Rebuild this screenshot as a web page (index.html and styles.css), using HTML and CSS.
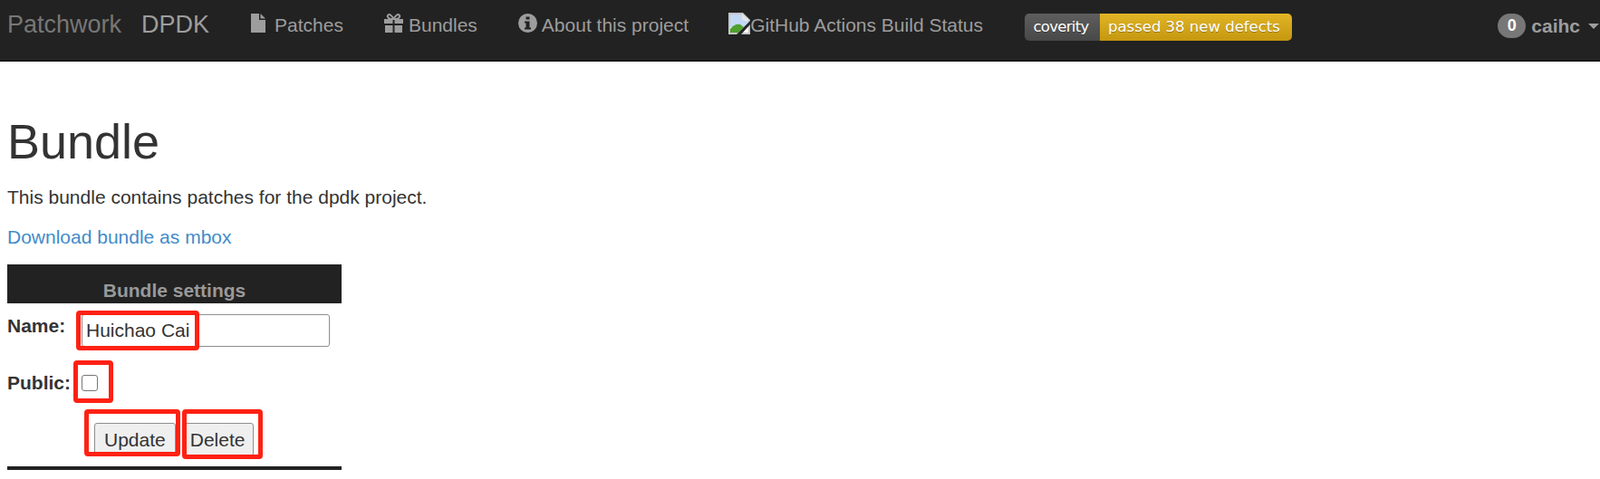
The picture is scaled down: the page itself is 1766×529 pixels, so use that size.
FILE: index.html
```html
<!DOCTYPE html>
<html lang="en">
<head>
<meta charset="utf-8">
<title>Bundle</title>
<link rel="stylesheet" href="styles.css">
</head>
<body>
<nav class="navbar">
  <a class="brand" href="#">Patchwork</a>
  <a class="project" href="#">DPDK</a>
  <a class="link link-patches" href="#">
    <svg class="glyph" viewBox="0 0 16 21" width="16" height="21"><path d="M0 0h9v7h7v14H0z" fill="#9d9d9d"/><path d="M10.500 0L16 5.500H10.500z" fill="#9d9d9d"/></svg>
    Patches</a>
  <a class="link link-bundles" href="#">
    <svg class="glyph" viewBox="0 0 21 21" width="21" height="21"><path fill="#9d9d9d" d="M0 6h9.500v5H0zM11.500 6H21v5h-9.500zM1 13h8.500v8H1zM11.500 13H20v8h-8.500z"/><path fill="none" stroke="#9d9d9d" stroke-width="2" d="M10.500 6C9 2.500 6 .2 4.500 1.500 3 2.800 4 5.500 7.500 6zM10.500 6C12 2.500 15 .2 16.500 1.500 18 2.800 17 5.500 13.500 6z"/></svg>
    Bundles</a>
  <a class="link link-about" href="#">
    <svg class="glyph" viewBox="0 0 21 21" width="21" height="21"><path fill-rule="evenodd" fill="#9d9d9d" d="M10.500 0a10.500 10.500 0 1 0 0 21 10.500 10.500 0 0 0 0-21zM8.500 3.500h4v3h-4zM7 8.500h5.500v7H14v2H7v-2h1.500v-5H7z"/></svg>
    About this project</a>
  <a class="link link-github" href="#">
    <svg class="broken" viewBox="0 0 24 24" width="24" height="24"><path fill="#c6c6c6" d="M0 0h16l8 8v16H0z"/><path fill="#fff" d="M2 2h13l7 7v13H2z"/><path fill="#c3d8f5" d="M2 2h13l1 6 6 1v7H2z"/><path fill="#4fa02e" d="M2 22v-4c3-4 7-6 11-5l4 3-6 6z"/><path fill="#262626" d="M9 24l15-15v4L14 24z"/><path fill="#e4e4e4" d="M15 1l8 7h-8z"/></svg><span>GitHub Actions Build Status</span></a>
  <span class="shield"><span class="shield-label">coverity</span><span class="shield-value">passed 38 new defects</span></span>
  <a class="user" href="#"><span class="count">0</span><b>caihc</b><i class="caret"></i></a>
</nav>
<main class="content">
  <h1>Bundle</h1>
  <p class="intro">This bundle contains patches for the dpdk project.</p>
  <p class="download"><a href="#">Download bundle as mbox</a></p>
  <table class="settings">
    <tr><th colspan="2" class="settings-head">Bundle settings</th></tr>
    <tr class="row-name">
      <td class="label">Name:</td>
      <td><input class="name-input" type="text" value="Huichao Cai"></td>
    </tr>
    <tr class="row-public">
      <td class="label">Public:</td>
      <td><input class="public-check" type="checkbox"></td>
    </tr>
    <tr class="row-actions">
      <td></td>
      <td class="actions"><button class="btn-update" type="button">Update</button><button class="btn-delete" type="button">Delete</button></td>
    </tr>
    <tr><td colspan="2" class="settings-foot"></td></tr>
  </table>
</main>
<div class="mark mark-name"></div>
<div class="mark mark-public"></div>
<div class="mark mark-update"></div>
<div class="mark mark-delete"></div>
</body>
</html>
```
FILE: styles.css
```css
* { box-sizing: border-box; }
html, body { margin: 0; padding: 0; }
body {
  position: relative;
  background: #fff;
  color: #333;
  font-family: "Liberation Sans", Arial, sans-serif;
  font-size: 21px;
  line-height: 30px;
}
a { text-decoration: none; }
.navbar {
  display: flex;
  align-items: flex-start;
  height: 68px;
  padding: 0 1px 0 8px;
  background: #222;
  border-bottom: 1px solid #080808;
  color: #9d9d9d;
}
.navbar a { color: #9d9d9d; }
.brand, .project { font-size: 27px; line-height: 30px; padding-top: 12px; }
.navbar .brand { color: #777; }
.project { margin-left: 22px; }
.link { display: flex; align-items: flex-start; padding-top: 13px; white-space: nowrap; }
.glyph { flex: none; margin-top: 2px; }
.link-patches { margin-left: 46px; gap: 10px; }
.link-bundles { margin-left: 45px; gap: 6px; }
.link-about { margin-left: 45px; gap: 5px; }
.link-github { margin-left: 44px; gap: 0; }
.broken { flex: none; margin-top: 1px; }
.shield {
  display: flex;
  height: 30px;
  margin: 15px 0 0 46px;
  border-radius: 5px;
  overflow: hidden;
  font-family: "DejaVu Sans", Verdana, sans-serif;
  font-size: 16.5px;
  line-height: 29px;
  color: #fff;
  text-align: center;
  text-shadow: 0 1px 0 rgba(1, 1, 1, .3);
}
.shield-label { width: 83px; padding-right: 3px; background: linear-gradient(#5e5e5e, #484848); letter-spacing: -.7px; }
.shield-value { width: 212px; padding-right: 4px; background: linear-gradient(#e2b526, #c4970f); }
.user { display: flex; align-items: center; margin-left: auto; padding-top: 15px; line-height: 27px; white-space: nowrap; }
.count {
  width: 31px;
  height: 27px;
  border-radius: 14px;
  background: #777;
  color: #fff;
  font-size: 18px;
  font-weight: 700;
  line-height: 27px;
  text-align: center;
}
.user b { margin-left: 6px; }
.caret {
  width: 0; height: 0;
  margin-left: 9px;
  border-top: 6px solid #9d9d9d;
  border-left: 6px solid transparent;
  border-right: 6px solid transparent;
}
.content { padding: 0 8px; }
h1 { margin: 58px 0 0; font-size: 54px; font-weight: 500; line-height: 60px; color: #333; }
.intro { margin: 17px 0 0; }
.download { margin: 14px 0 0; }
.download a { color: #428bca; }
.settings { width: 369px; margin-top: 15px; border-collapse: collapse; }
.settings td, .settings th { padding: 0; }
.settings-head {
  height: 43px;
  padding-top: 15px !important;
  background: #222;
  color: #999;
  font-size: 21px;
  font-weight: 700;
  line-height: 28px;
  text-align: center;
}
.label { width: 82px; font-weight: 700; vertical-align: top; }
.row-name { height: 58px; }
.row-name td { vertical-align: top; padding-top: 12px; }
.row-name .label { padding-top: 10px; }
.row-public { height: 62px; }
.row-public td { vertical-align: top; padding-top: 21px; }
.row-public .label { padding-top: 15px; }
.name-input {
  display: block;
  width: 274px;
  height: 36px;
  padding: 1px 4px;
  border: 1px solid #8f8f8f;
  border-radius: 3px;
  background: #fff;
  color: #333;
  font: 400 21px/1.2 "Liberation Sans", Arial, sans-serif;
}
.public-check {
  display: block;
  width: 18px;
  height: 18px;
  margin: 0;
  appearance: none;
  border: 1px solid #767676;
  border-radius: 3px;
  background: #fff;
}
.row-actions { height: 60px; }
.row-actions td { vertical-align: top; }
.actions { padding: 12px 0 0 14px !important; display: flex; gap: 7px; }
.actions button {
  height: 37px;
  padding: 0 10px;
  border: 1px solid #8f8f8f;
  border-radius: 3px;
  background: #efefef;
  color: #333;
  font: 400 21px/1.2 "Liberation Sans", Arial, sans-serif;
}
.actions .btn-delete { padding: 0 9px 0 8px; }
.settings-foot { height: 4px; background: #222; }
.mark {
  position: absolute;
  border: 5px solid #ff2113;
  border-radius: 4px;
  pointer-events: none;
}
.mark-name { left: 84px; top: 343px; width: 136px; height: 44px; }
.mark-public { left: 81px; top: 398px; width: 44px; height: 47px; }
.mark-update { left: 93px; top: 452px; width: 106px; height: 52px; }
.mark-delete { left: 201px; top: 452px; width: 89px; height: 55px; }
```
